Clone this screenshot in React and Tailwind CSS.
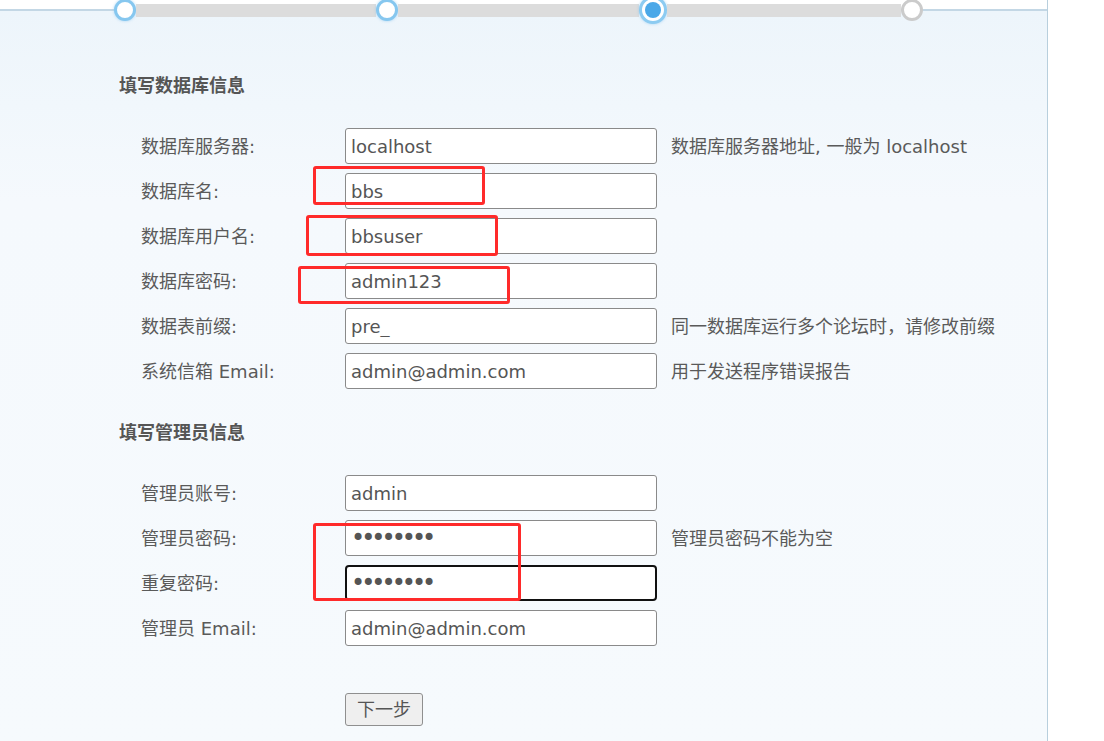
import React from 'react';

const dbRows = [
  { label: '数据库服务器:', value: 'localhost', hint: '数据库服务器地址, 一般为 localhost' },
  { label: '数据库名:', value: 'bbs' },
  { label: '数据库用户名:', value: 'bbsuser' },
  { label: '数据库密码:', value: 'admin123' },
  { label: '数据表前缀:', value: 'pre_', hint: '同一数据库运行多个论坛时，请修改前缀' },
  { label: '系统信箱 Email:', value: 'admin@admin.com', hint: '用于发送程序错误报告' },
];

const adminRows = [
  { label: '管理员账号:', value: 'admin' },
  { label: '管理员密码:', value: 'admin123', type: 'password', hint: '管理员密码不能为空' },
  { label: '重复密码:', value: 'admin123', type: 'password', focused: true },
  { label: '管理员 Email:', value: 'admin@admin.com' },
];

// One label / input / hint line
const FormRow = ({ row }) => {
  const isPwd = row.type === 'password';
  return (
    <div className="flex items-center h-[36px]">
      <label className="w-[204px] shrink-0 text-[18px] text-[#5a5a5a]">{row.label}</label>
      <input
        type={row.type || 'text'}
        defaultValue={row.value}
        readOnly
        className={`w-[312px] h-[36px] shrink-0 bg-white text-[#555] outline-none ${
          isPwd ? 'text-[24px] tracking-[-4px]' : 'text-[18px]'
        } ${
          row.focused ? 'border-2 border-[#111] rounded-[4px] px-[4px]' : 'border border-[#8a8a8a] rounded-[3px] px-[5px]'
        }`}
      />
      {row.hint && <span className="ml-[14px] text-[18px] text-[#5a5a5a] whitespace-nowrap">{row.hint}</span>}
    </div>
  );
};

const SectionTitle = ({ children, className }) => (
  <h3 className={`h-[24px] leading-[24px] text-[18px] font-bold text-[#555] ${className}`}>{children}</h3>
);

const StepDot = ({ state }) => {
  if (state === 'current') {
    return (
      <div className="w-[28px] h-[28px] shrink-0 rounded-full bg-white border-[3px] border-[#8ccbf1] flex items-center justify-center shadow-[0_0_3px_rgba(120,190,240,0.6)]">
        <div className="w-[16px] h-[16px] rounded-full bg-[#4aa8e8]" />
      </div>
    );
  }
  return (
    <div
      className={`w-[22px] h-[22px] shrink-0 rounded-full bg-white border-[3px] ${
        state === 'done' ? 'border-[#86c7ef] shadow-[0_0_3px_rgba(120,190,240,0.6)]' : 'border-[#cbcbcb]'
      }`}
    />
  );
};

const StepLine = ({ w }) => <div className={`h-[13px] bg-[#dcdcdc] ${w}`} />;

export default function App() {
  return (
    <div
      className="h-[741px] overflow-hidden bg-white"
      style={{ fontFamily: '"DejaVu Sans", "Noto Sans CJK SC", sans-serif' }}
    >
      <div className="relative w-[1048px] h-full border-r border-[#b8cfdd]">
        {/* Step progress, sits over the top rule */}
        <div className="relative h-[11px] bg-white border-b-2 border-[#c3d7e5]">
          <div className="absolute top-[-1px] left-[114px] h-[22px] flex items-center">
            <StepDot state="done" />
            <StepLine w="w-[240px]" />
            <StepDot state="done" />
            <StepLine w="w-[241px]" />
            <StepDot state="current" />
            <StepLine w="w-[234px]" />
            <StepDot state="todo" />
          </div>
        </div>

        {/* Form body */}
        <div className="h-full pl-[119px] pt-[63px] bg-[linear-gradient(to_bottom,#edf5fb_0px,#f5f9fd_190px,#f6fafd_100%)]">
          <SectionTitle>填写数据库信息</SectionTitle>
          <div className="mt-[30px] pl-[22px] flex flex-col gap-[9px]">
            {dbRows.map((row) => (
              <FormRow key={row.label} row={row} />
            ))}
          </div>

          <SectionTitle className="mt-[32px]">填写管理员信息</SectionTitle>
          <div className="mt-[30px] pl-[22px] flex flex-col gap-[9px]">
            {adminRows.map((row) => (
              <FormRow key={row.label} row={row} />
            ))}
          </div>

          <div className="mt-[47px] pl-[226px]">
            <button className="w-[78px] h-[33px] bg-[#efefef] border border-[#8f8f8f] rounded-[3px] text-[18px] text-[#555]">
              下一步
            </button>
          </div>
        </div>

        {/* Red annotation boxes drawn over the screenshot */}
        <div className="absolute left-[313px] top-[166px] w-[172px] h-[39px] border-[3px] border-[#ff2a2a] rounded-[3px]" />
        <div className="absolute left-[306px] top-[215px] w-[192px] h-[41px] border-[3px] border-[#ff2a2a] rounded-[3px]" />
        <div className="absolute left-[298px] top-[266px] w-[212px] h-[38px] border-[3px] border-[#ff2a2a] rounded-[3px]" />
        <div className="absolute left-[313px] top-[523px] w-[208px] h-[78px] border-[3px] border-[#ff2a2a] rounded-[3px]" />
      </div>
    </div>
  );
}
